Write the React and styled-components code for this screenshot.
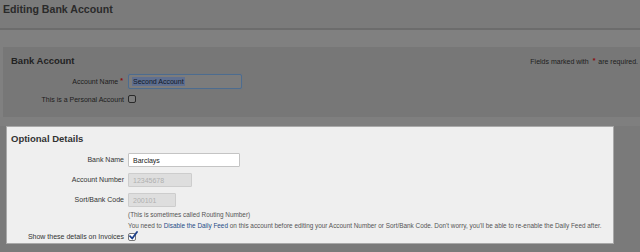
import React from "react";
import styled, { createGlobalStyle } from "styled-components";

const Global = createGlobalStyle`
  html, body { margin: 0; padding: 0; background: #7a7a7a; }
  body { font-family: "Liberation Sans", Arial, sans-serif; width: 640px; height: 252px; overflow: hidden; -webkit-font-smoothing: antialiased; }
  * { box-sizing: border-box; }
`;

const Header = styled.header`
  height: 30px;
  background: #7b7b7b;
  border-bottom: 2px solid #6c6c6c;
  padding: 3px 3px 0;
`;

const PageTitle = styled.h1`
  margin: 0;
  font-size: 10.6px;
  line-height: 13px;
  font-weight: bold;
  color: #2a2a2a;
`;

const Content = styled.main`
  background: #808080;
  padding-top: 17px;
`;

const DimPanel = styled.section`
  margin-left: 3px;
  height: 70px;
  background: #777777;
  padding-top: 8px;
`;

const TitleRow = styled.div`
  display: flex;
  justify-content: space-between;
  align-items: center;
  height: 12px;
  padding: 0 2px 0 ${(p) => p.$pl}px;
`;

const SectionTitle = styled.h2`
  margin: 0;
  font-size: 9.5px;
  line-height: 12px;
  font-weight: bold;
  color: ${(p) => (p.$dim ? "#222" : "#333")};
`;

const Note = styled.span`
  font-size: 7px;
  color: #202020;
  white-space: nowrap;
`;

const Star = styled.span`
  color: #8a0c0c;
  font-weight: bold;
  margin: 0 1px 0 2px;
  position: relative;
  top: -1px;
`;

const Form = styled.div`
  display: grid;
  grid-template-columns: ${(p) => p.$label}px auto;
  column-gap: 4px;
  row-gap: ${(p) => p.$gap}px;
  align-items: center;
  margin-top: ${(p) => p.$top}px;
`;

const Label = styled.label`
  text-align: right;
  font-size: 7px;
  line-height: 12px;
  color: ${(p) => (p.$dim ? "#1c1c1c" : "#333")};
  white-space: nowrap;
  margin-top: ${(p) => p.$mt || 0}px;
`;

const Field = styled.div`
  display: flex;
  align-items: center;
  height: ${(p) => p.$h || 14}px;
  margin-top: ${(p) => p.$mt || 0}px;
`;

const Input = styled.div`
  width: ${(p) => p.$w}px;
  height: ${(p) => p.$h || 14}px;
  display: flex;
  align-items: center;
  padding: 0 4px;
  font-size: 7px;
  border: 1px solid ${(p) => (p.$disabled ? "#cdcdcd" : "#c4c4c4")};
  background: ${(p) => (p.$disabled ? "#dedede" : "#ffffff")};
  color: ${(p) => (p.$disabled ? "#b0b0b0" : "#222")};
  border-radius: 1px;
`;

const FocusInput = styled.div`
  width: 114px;
  height: 15px;
  display: flex;
  align-items: center;
  padding: 0 3px;
  font-size: 7px;
  border: 1.5px solid #4d6c8f;
  background: #7c7c7c;
  border-radius: 2px;
  box-shadow: 0 0 1px #5b7897;
`;

const Selected = styled.span`
  background: #5f6f90;
  color: #101828;
  padding: 0 1px;
  line-height: 9px;
`;

const Box = styled.span`
  width: 8px;
  height: 8px;
  border: 1px solid ${(p) => (p.$dim ? "#2a2a2a" : "#777")};
  border-radius: 2px;
  background: ${(p) => (p.$dim ? "#7d7d7d" : "#fff")};
  position: relative;
  margin-top: ${(p) => p.$mt || 0}px;
`;

const Gap = styled.div`
  height: 9px;
  background: #7f7f7f;
`;

const Bright = styled.section`
  margin-left: 6px;
  width: 608px;
  height: 118px;
  background: #efefef;
  border: 1px solid #a9a9a9;
  padding-top: 6px;
`;

const Help = styled.div`
  grid-column: 2;
  font-size: 6.4px;
  line-height: 10.5px;
  color: #555;
  white-space: nowrap;
  margin-top: -3px;
`;

const Link = styled.a`
  color: #1f4c86;
  text-decoration: none;
`;

function Check() {
  return (
    <svg width="10" height="10" viewBox="0 0 10 10" style={{ position: "absolute", left: -1, top: -3 }}>
      <path d="M2 5.2 L4.2 7.5 L9 1" fill="none" stroke="#1d3f8a" strokeWidth="1.8" strokeLinecap="round" strokeLinejoin="round" />
    </svg>
  );
}

export default function App() {
  return (
    <>
      <Global />
      <Header>
        <PageTitle>Editing Bank Account</PageTitle>
      </Header>
      <Content>
        <DimPanel>
          <TitleRow $pl={8}>
            <SectionTitle $dim>Bank Account</SectionTitle>
            <Note>
              Fields marked with <Star>*</Star> are required.
            </Note>
          </TitleRow>
          <Form $label={121} $gap={5} $top={7}>
            <Label $dim>
              Account Name<Star>*</Star>
            </Label>
            <Field $h={15}>
              <FocusInput>
                <Selected>Second Account</Selected>
              </FocusInput>
            </Field>
            <Label $dim>This is a Personal Account</Label>
            <Field $h={12}>
              <Box $dim $mt={-3} />
            </Field>
          </Form>
        </DimPanel>
        <Gap />
      </Content>
      <Bright>
        <TitleRow $pl={4}>
          <SectionTitle>Optional Details</SectionTitle>
        </TitleRow>
        <Form $label={117} $gap={6} $top={8}>
          <Label>Bank Name</Label>
          <Field>
            <Input $w={112}>Barclays</Input>
          </Field>
          <Label>Account Number</Label>
          <Field>
            <Input $w={64} $disabled>12345678</Input>
          </Field>
          <Label>Sort/Bank Code</Label>
          <Field>
            <Input $w={48} $disabled>200101</Input>
          </Field>
          <Help>
            (This is sometimes called Routing Number)
            <br />
            You need to <Link href="#">Disable the Daily Feed</Link> on this account before editing your Account Number or Sort/Bank Code. Don't worry, you'll be able to re-enable the Daily Feed after.
          </Help>
          <Label $mt={-6}>Show these details on Invoices</Label>
          <Field $mt={-6} $h={12}>
            <Box>
              <Check />
            </Box>
          </Field>
        </Form>
      </Bright>
    </>
  );
}
